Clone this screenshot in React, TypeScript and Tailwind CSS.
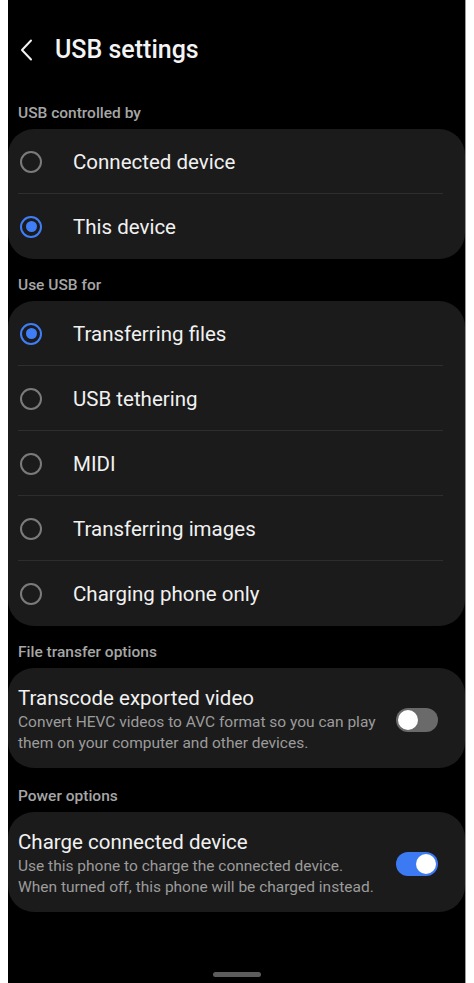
import React, { useState } from 'react';

const font = { fontFamily: 'Roboto, "Noto Sans", sans-serif' };

type RadioRowProps = {
  label: string;
  selected: boolean;
  last?: boolean;
  onSelect: () => void;
};

const RadioRow: React.FC<RadioRowProps> = ({ label, selected, last, onSelect }) => (
  <div className="relative">
    <button onClick={onSelect} className="flex h-[65px] w-full items-center text-left">
      <span className="ml-[12px] flex h-[22px] w-[22px] items-center justify-center">
        {selected ? (
          <span className="flex h-[22px] w-[22px] items-center justify-center rounded-full border-[2.5px] border-[#3f7ef6]">
            <span className="h-[11px] w-[11px] rounded-full bg-[#3f7ef6]" />
          </span>
        ) : (
          <span className="h-[22px] w-[22px] rounded-full border-2 border-[#7b7b7b]" />
        )}
      </span>
      <span className="ml-[31px] text-[20.5px] leading-[26px] text-[#f1f1f1]">{label}</span>
    </button>
    {/* divider sits on the row's bottom edge */}
    {!last && <div className="absolute bottom-0 left-[10px] right-[22px] h-px bg-[#2e2e2e]" />}
  </div>
);

const Toggle: React.FC<{ on: boolean; onChange: () => void }> = ({ on, onChange }) => (
  <button
    onClick={onChange}
    className={`flex h-[24px] w-[42px] shrink-0 items-center rounded-full px-[2px] ${
      on ? 'justify-end bg-[#3c7af4]' : 'justify-start bg-[#6a6a6a]'
    }`}
  >
    <span className="h-[20px] w-[20px] rounded-full bg-white" />
  </button>
);

const SectionLabel: React.FC<{ text: string; h: string }> = ({ text, h }) => (
  <div className={`flex items-end pb-[7px] pl-[10px] ${h}`}>
    <span className="text-[15.5px] font-medium leading-[18px] text-[#a6a6a6]">{text}</span>
  </div>
);

const SwitchCard: React.FC<{ title: string; lines: [string, string]; on: boolean; onChange: () => void }> = ({
  title,
  lines,
  on,
  onChange,
}) => (
  <div className="flex items-center rounded-[26px] bg-[#1b1b1b] pb-[14px] pl-[10px] pr-[27px] pt-[17px]">
    <div className="flex-1">
      <div className="text-[20.5px] leading-[27px] text-[#f1f1f1]">{title}</div>
      <div className="text-[15.5px] leading-[21px] text-[#9c9c9c]">
        {lines[0]}
        <br />
        {lines[1]}
      </div>
    </div>
    <Toggle on={on} onChange={onChange} />
  </div>
);

export default function App() {
  const [controller, setController] = useState('This device');
  const [usage, setUsage] = useState('Transferring files');
  const [transcode, setTranscode] = useState(false);
  const [charge, setCharge] = useState(true);

  const usageOptions = [
    'Transferring files',
    'USB tethering',
    'MIDI',
    'Transferring images',
    'Charging phone only',
  ];

  return (
    <div className="flex h-[983px] w-[474px] bg-white" style={font}>
      <div className="ml-[8px] flex h-full w-[458px] flex-col border-r border-[#9a9a9a] bg-black">
        {/* Header */}
        <div className="flex h-[100px] items-center">
          <svg className="ml-[12px]" width="14" height="22" viewBox="0 0 14 22" fill="none">
            <polyline points="11,1.5 2,11 11,20.5" stroke="#f2f2f2" strokeWidth="2" strokeLinecap="round" strokeLinejoin="round" />
          </svg>
          <h1 className="ml-[21px] text-[25px] font-medium leading-[30px] text-[#f4f4f4]">USB settings</h1>
        </div>

        <SectionLabel text="USB controlled by" h="h-[29px]" />
        <div className="rounded-[26px] bg-[#1b1b1b]">
          {['Connected device', 'This device'].map((o, i) => (
            <RadioRow key={o} label={o} selected={controller === o} last={i === 1} onSelect={() => setController(o)} />
          ))}
        </div>

        <SectionLabel text="Use USB for" h="h-[42px]" />
        <div className="rounded-[26px] bg-[#1b1b1b]">
          {usageOptions.map((o, i) => (
            <RadioRow key={o} label={o} selected={usage === o} last={i === usageOptions.length - 1} onSelect={() => setUsage(o)} />
          ))}
        </div>

        <SectionLabel text="File transfer options" h="h-[42px]" />
        <SwitchCard
          title="Transcode exported video"
          lines={['Convert HEVC videos to AVC format so you can play', 'them on your computer and other devices.']}
          on={transcode}
          onChange={() => setTranscode(!transcode)}
        />

        <SectionLabel text="Power options" h="h-[44px]" />
        <SwitchCard
          title="Charge connected device"
          lines={['Use this phone to charge the connected device.', 'When turned off, this phone will be charged instead.']}
          on={charge}
          onChange={() => setCharge(!charge)}
        />

        <div className="flex flex-1 items-end justify-center pb-[6px]">
          <div className="h-[5px] w-[48px] rounded-full bg-[#5c5c5c]" />
        </div>
      </div>
    </div>
  );
}
